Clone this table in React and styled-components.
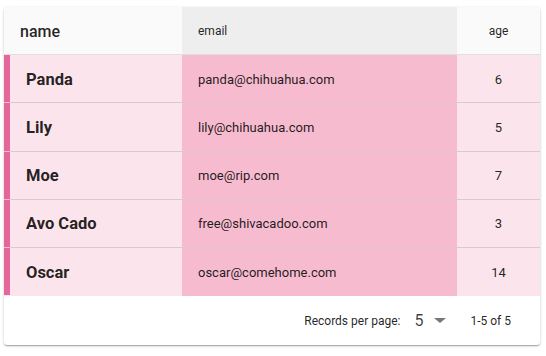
import React from 'react';
import styled, { createGlobalStyle } from 'styled-components';

const GlobalStyle = createGlobalStyle`
  body {
    margin: 0;
    background: #ffffff;
    font-family: Roboto, "Liberation Sans", Arial, sans-serif;
  }
`;

const Page = styled.div`
  padding: 7px 6px 10px 4px;
`;

const Card = styled.div`
  width: 536px;
  background: #fff;
  border-radius: 3px;
  box-shadow: 0 1px 3px rgba(0, 0, 0, 0.2), 0 1px 1px rgba(0, 0, 0, 0.14), 0 2px 1px -1px rgba(0, 0, 0, 0.12);
  overflow: hidden;
`;

const Grid = styled.div`
  display: grid;
  grid-template-columns: 178px 275px 83px;
`;

const HeadCell = styled.div`
  box-sizing: border-box;
  height: 48px;
  padding-top: 1px;
  border-bottom: 1px solid #e0e0e0;
  background: ${p => (p.sorted ? '#eeeeee' : '#fafafa')};
  display: flex;
  align-items: center;
  justify-content: ${p => (p.center ? 'center' : 'flex-start')};
  padding-left: ${p => (p.center ? 0 : p.pad)}px;
  font-size: ${p => (p.big ? 16 : 12)}px;
  font-weight: ${p => (p.big ? 500 : 400)};
  color: rgba(0, 0, 0, 0.87);
`;

const Cell = styled.div`
  height: 48.25px;
  box-sizing: border-box;
  border-bottom: 1px solid ${p => (p.last ? 'transparent' : '#dfc7d0')};
  background: ${p => (p.sorted ? '#f6bbcf' : '#fce4ec')};
  display: flex;
  align-items: center;
  justify-content: ${p => (p.center ? 'center' : 'flex-start')};
  padding-left: ${p => (p.center ? 0 : p.pad)}px;
  padding-top: 1px;
  font-size: ${p => (p.big ? 16.5 : 13)}px;
  font-weight: ${p => (p.big ? 700 : 400)};
  color: rgba(0, 0, 0, 0.87);
  box-shadow: ${p => (p.stripe ? 'inset 6px 0 0 #e5679a' : 'none')};
`;

const Footer = styled.div`
  height: 49px;
  display: flex;
  align-items: center;
  justify-content: flex-end;
  padding-right: 29px;
  font-size: 12px;
  color: rgba(0, 0, 0, 0.87);
`;

const Label = styled.span`
  margin-right: 14px;
`;

const PerPage = styled.div`
  display: flex;
  align-items: center;
  font-size: 16px;
  color: rgba(0, 0, 0, 0.75);
  margin-right: 24px;
`;

const Arrow = styled.span`
  width: 0;
  height: 0;
  margin-left: 11px;
  border-left: 6px solid transparent;
  border-right: 6px solid transparent;
  border-top: 5px solid #777;
`;

const rows = [
  { name: 'Panda', email: 'panda@chihuahua.com', age: 6 },
  { name: 'Lily', email: 'lily@chihuahua.com', age: 5 },
  { name: 'Moe', email: 'moe@rip.com', age: 7 },
  { name: 'Avo Cado', email: 'free@shivacadoo.com', age: 3 },
  { name: 'Oscar', email: 'oscar@comehome.com', age: 14 },
];

export default function App() {
  return (
    <Page>
      <GlobalStyle />
      <Card>
        <Grid>
          <HeadCell big pad={16}>name</HeadCell>
          <HeadCell sorted pad={16}>email</HeadCell>
          <HeadCell center>age</HeadCell>
          {rows.map((r, i) => {
            const last = i === rows.length - 1;
            return (
              <React.Fragment key={r.name}>
                <Cell big stripe pad={22} last={last}>{r.name}</Cell>
                <Cell sorted pad={16} last={last}>{r.email}</Cell>
                <Cell center last={last}>{r.age}</Cell>
              </React.Fragment>
            );
          })}
        </Grid>
        <Footer>
          <Label>Records per page:</Label>
          <PerPage>
            5
            <Arrow />
          </PerPage>
          <span>1-5 of 5</span>
        </Footer>
      </Card>
    </Page>
  );
}
